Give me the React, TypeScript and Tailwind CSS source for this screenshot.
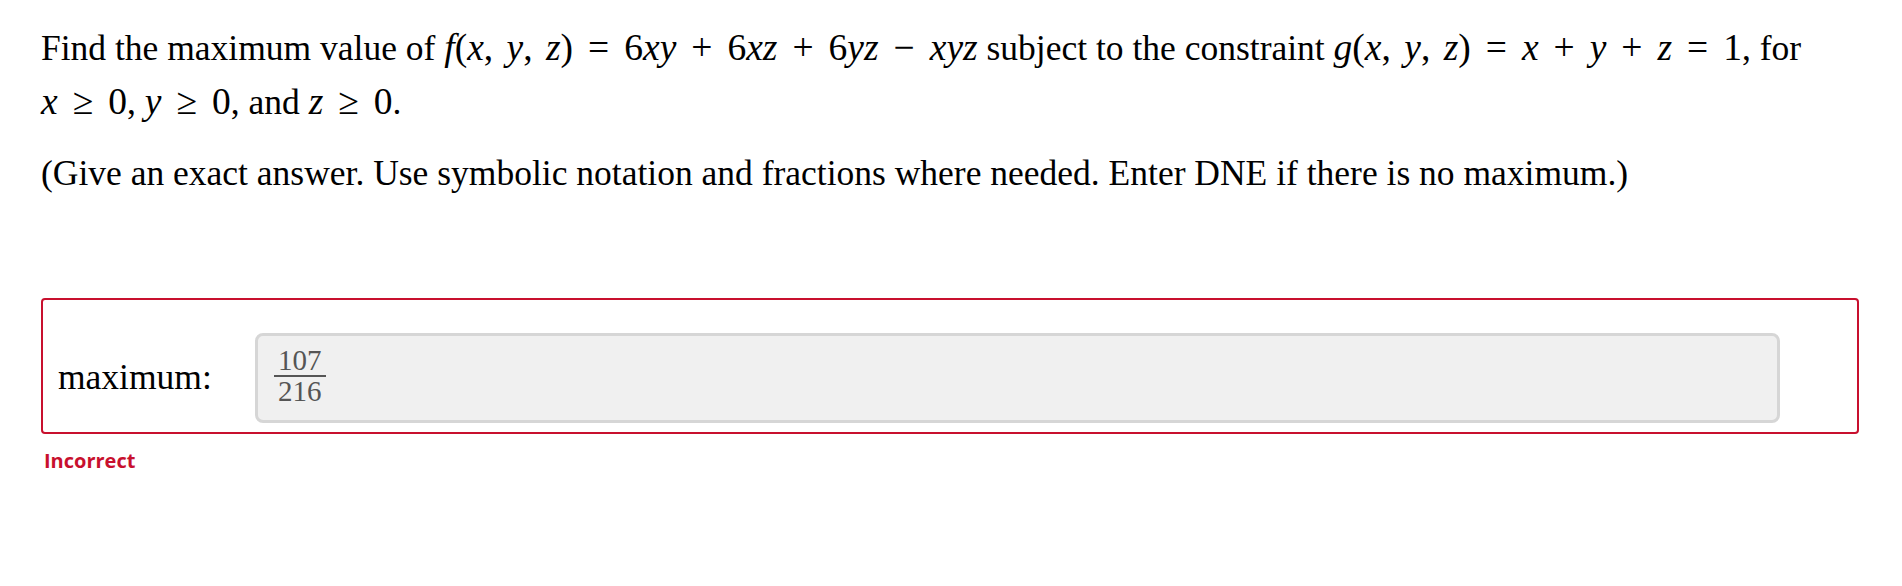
import React from "react";

const serif = "font-['Liberation_Serif','Times_New_Roman',serif]";

function V({ children }: { children: React.ReactNode }) {
  return <span className="italic">{children}</span>;
}

function Op({ children }: { children: React.ReactNode }) {
  return <span className="mx-[15px]">{children}</span>;
}

// math runs are set a little larger than the prose, like the reference's math font
function M({ children }: { children: React.ReactNode }) {
  return <span className="whitespace-nowrap text-[37.5px] leading-none">{children}</span>;
}

function Args() {
  return (
    <>
      (<V>x</V>,<span className="ml-[4px]"> </span>
      <V>y</V>,<span className="ml-[4px]"> </span>
      <V>z</V>)
    </>
  );
}

export default function App() {
  return (
    <div className={`min-h-[586px] bg-white pl-[41px] pr-[43px] pt-[22px] text-black ${serif}`}>
      <p className="text-[35.5px] leading-[53.5px]">
        Find the maximum value of{" "}
        <M>
          <V>f</V>
          <Args />
          <Op>=</Op>6<V>xy</V>
          <Op>+</Op>6<V>xz</V>
          <Op>+</Op>6<V>yz</V>
          <Op>−</Op>
          <V>xyz</V>
        </M>{" "}
        subject to the constraint{" "}
        <M>
          <V>g</V>
          <Args />
          <Op>=</Op>
          <V>x</V>
          <Op>+</Op>
          <V>y</V>
          <Op>+</Op>
          <V>z</V>
          <Op>=</Op>1
        </M>
        , for
        <br />
        <M>
          <V>x</V>
          <Op>≥</Op>0
        </M>
        ,{" "}
        <M>
          <V>y</V>
          <Op>≥</Op>0
        </M>
        , and{" "}
        <M>
          <V>z</V>
          <Op>≥</Op>0
        </M>
        .
      </p>

      <p className="mt-[18px] text-[35.5px] leading-[53.5px]">
        (Give an exact answer. Use symbolic notation and fractions where needed. Enter DNE if
        there is no maximum.)
      </p>

      <div className="mt-[97px] flex items-center rounded-[4px] border-2 border-[#c8102e] pb-[9px] pl-[15px] pr-[77px] pt-[33px]">
        <span className="w-[154px] shrink-0 text-[35.5px] leading-none">maximum:</span>
        <div className="ml-[43px] flex h-[90px] flex-1 items-center rounded-[8px] border-[3px] border-[#d6d6d6] bg-[#f0f0f0] pl-[16px]">
          <span className="-mt-[5px] inline-flex flex-col items-center text-[29px] leading-[26px] text-[#555555]">
            <span className="px-[4px]">107</span>
            <span className="mt-[2px] h-[2px] w-full bg-[#555555]" />
            <span className="px-[4px] pt-[1px]">216</span>
          </span>
        </div>
      </div>

      <p className="ml-[3px] mt-[13px] font-['Open_Sans',sans-serif] text-[20px] font-bold leading-[28px] text-[#c8102e]">
        Incorrect
      </p>
    </div>
  );
}
